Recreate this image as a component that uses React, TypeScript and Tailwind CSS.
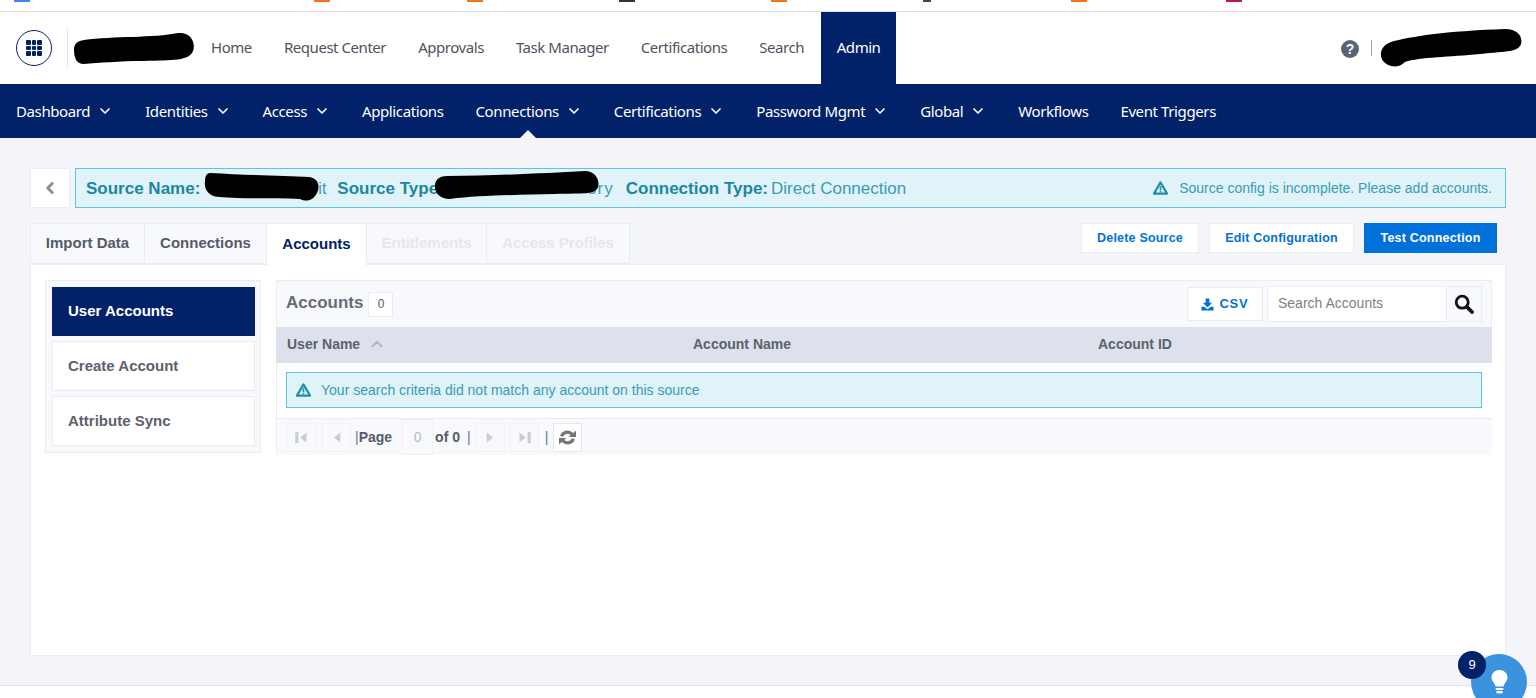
import React from "react";
import { ChevronDown, ChevronLeft, ChevronUp } from "lucide-react";

const top = ["Home", "Request Center", "Approvals", "Task Manager", "Certifications", "Search"];
const nav: [string, boolean, boolean?][] = [
  ["Dashboard", true],
  ["Identities", true],
  ["Access", true],
  ["Applications", false],
  ["Connections", true, true],
  ["Certifications", true],
  ["Password Mgmt", true],
  ["Global", true],
  ["Workflows", false],
  ["Event Triggers", false],
];
const favs: [string, string][] = [
  ["ml-[14px] w-[16px]", "bg-[#4285f4]"],
  ["ml-[284px] w-[16px]", "bg-[#f97316]"],
  ["ml-[137px] w-[16px]", "bg-[#f97316]"],
  ["ml-[136px] w-[16px]", "bg-[#333333]"],
  ["ml-[136px] w-[16px]", "bg-[#f97316]"],
  ["ml-[136px] w-[8px]", "bg-[#444444]"],
  ["ml-[140px] w-[16px]", "bg-[#f97316]"],
  ["ml-[139px] w-[16px]", "bg-[#b91c3c]"],
];

function Warn({ className }: { className: string }) {
  return (
    <svg viewBox="0 0 16 15" className={className}>
      <path d="M8 1.5 L15 13.5 H1 Z" fill="none" stroke="#1f8fa8" strokeWidth="2.3" strokeLinejoin="round" />
      <rect x="7.1" y="5.6" width="1.8" height="4.2" fill="#1f8fa8" />
      <rect x="7.1" y="10.5" width="1.8" height="1.7" fill="#1f8fa8" />
    </svg>
  );
}

function Blob({ className, d, viewBox }: { className: string; d: string; viewBox: string }) {
  return (
    <svg viewBox={viewBox} className={className} preserveAspectRatio="none">
      <path d={d} fill="#000" />
    </svg>
  );
}

function PagerBtn({ d, bar, barLeft }: { d: string; bar?: boolean; barLeft?: boolean }) {
  return (
    <div className="w-[29px] h-[29px] border border-[#f0f2f7] bg-[#f8f9fc] flex items-center justify-center">
      <svg viewBox="0 0 12 12" className="w-[15px] h-[15px]">
        <path d={d} fill="#c9ccd3" />
        {bar && <rect x={barLeft ? 1 : 8.5} y="1.5" width="2.5" height="9" fill="#c9ccd3" />}
      </svg>
    </div>
  );
}

export default function App() {
  return (
    <div className="relative h-[698px] w-[1536px] overflow-hidden bg-[#f3f5f9] font-['Liberation_Sans',Arial,sans-serif]">
      <div className="h-[12px] bg-white border-b border-[#e2e2e2] flex items-start">
        {favs.map(([m, c], i) => (
          <div key={i} className={`${m} h-[2px] ${c}`} />
        ))}
      </div>

      <header className="h-[72px] bg-white flex items-stretch font-['Noto_Sans',sans-serif] relative">
        <div className="w-[67px] flex items-center">
          <div className="ml-[16px] w-[36px] h-[36px] rounded-full border border-[#012169] flex items-center justify-center">
            <div className="grid grid-cols-3 gap-[1px]">
              {Array.from({ length: 9 }).map((_, i) => (
                <div key={i} className="w-[4.5px] h-[4.5px] rounded-[1px] bg-[#012169]" />
              ))}
            </div>
          </div>
        </div>
        <div className="w-px h-[40px] bg-[#e5e7eb] self-center" />
        <div className="w-[127px] flex items-center">
          <Blob
            className="ml-[6px] w-[122px] h-[31px]"
            viewBox="0 0 122 31"
            d="M10 7 C40 3 80 5 105 0 C118 -1 123 10 120 18 C116 28 100 27 70 28 C45 28 25 30 10 31 C2 31 0 24 0 17 C0 10 4 8 10 7 Z"
          />
        </div>
        <nav className="flex items-stretch text-[15px] text-[#4d5360] tracking-[-0.45px]">
          {top.map((t) => (
            <a key={t} className="px-[16px] pb-[1px] flex items-center whitespace-nowrap">{t}</a>
          ))}
          <a className="ml-[1px] w-[75px] pb-[1px] flex items-center justify-center bg-[#012169] text-white">Admin</a>
        </nav>
        <div className="ml-auto flex items-center pr-[14px]">
          <div className="mt-[2px] w-[18px] h-[18px] rounded-full bg-[#5a6478] text-white flex items-center justify-center text-[14px] font-bold font-['Liberation_Sans',sans-serif]">?</div>
          <div className="ml-[12px] w-px h-[16px] bg-[#9aa0ac]" />
          <Blob
            className="ml-[8px] w-[142px] h-[38px]"
            viewBox="0 0 142 38"
            d="M14 12 C40 6 70 2 125 0 C138 0 143 8 141 15 C138 23 128 22 100 25 C70 28 40 28 25 33 C18 40 8 38 3 32 C-2 24 2 15 14 12 Z"
          />
        </div>
      </header>

      <nav className="h-[54px] bg-[#012169] flex items-center pl-[16px] text-white text-[15px] tracking-[-0.39px] font-['Noto_Sans',sans-serif]">
        {nav.map(([t, chev, active]) => (
          <div key={t} className="relative mr-[32px] flex items-center h-full whitespace-nowrap">
            {t}
            {chev && <ChevronDown className="ml-[7px] w-[16px] h-[16px]" strokeWidth={2.5} />}
            {active && (
              <div className="absolute bottom-0 left-[44px] w-0 h-0 border-x-[8px] border-x-transparent border-b-[8px] border-b-[#f3f5f9]" />
            )}
          </div>
        ))}
      </nav>

      <main className="pt-[30px] pl-[30px] pr-[30px]">
        <div className="flex h-[40px] gap-[5px]">
          <div className="w-[40px] bg-white border border-[#e9ecf3] flex items-center justify-center">
            <ChevronLeft className="w-[18px] h-[18px] text-[#8a8f9a]" strokeWidth={4} />
          </div>
          <div className="relative flex-1 bg-[#dff3f9] border border-[#62c3dc] flex items-center pl-[10px] pr-[13px] pt-[2px] text-[17px] text-[#1c87a3] whitespace-nowrap">
            <b>Source Name:</b>
            <span className="ml-[118px] text-[16px] text-[#3a9bb4]">it</span>
            <b className="ml-[11px]">Source Type</b>
            <span className="ml-[149px] tracking-[1px] text-[#3a9bb4]">ory</span>
            <b className="ml-[12px]">Connection Type:</b>
            <span className="ml-[3px] text-[#3a9bb4]">Direct Connection</span>
            <div className="ml-auto mb-[2px] flex items-center text-[14px] text-[#3a9bb4]">
              <Warn className="w-[15px] h-[14px] mr-[11px]" />
              Source config is incomplete. Please add accounts.
            </div>
            <Blob
              className="absolute left-[128px] top-[4px] w-[115px] h-[29px]"
              viewBox="0 0 115 29"
              d="M6 0 C40 2 80 3 105 4 C115 5 116 14 113 20 C110 26 104 30 96 26 C70 25 40 26 15 24 C3 23 0 15 1 8 C1 3 3 0 6 0 Z"
            />
            <Blob
              className="absolute left-[359px] top-[2px] w-[164px] h-[28px]"
              viewBox="0 0 164 28"
              d="M12 5 C60 5 110 2 150 0 C161 0 165 10 163 16 C160 24 150 22 120 23 C85 24 45 24 15 28 C3 28 -1 20 0 13 C1 8 5 5 12 5 Z"
            />
          </div>
        </div>

        <div className="mt-[15px] flex items-start justify-between h-[41px] relative z-10">
          <div className="flex h-[42px] text-[15px] font-bold">
            <div className="w-[115px] h-[41px] flex items-center justify-center bg-[#f8f9fc] border border-[#e9ecf3] text-[#555b68]">Import Data</div>
            <div className="w-[122px] h-[41px] flex items-center justify-center bg-[#f8f9fc] border-y border-r border-[#e9ecf3] text-[#555b68]">Connections</div>
            <div className="w-[100px] pb-[1px] flex items-center justify-center bg-white border-t border-r border-[#e9ecf3] text-[#012169]">Accounts</div>
            <div className="w-[120px] h-[41px] flex items-center justify-center bg-[#f8f9fc] border-y border-r border-[#e9ecf3] text-[#e6e7ec]">Entitlements</div>
            <div className="w-[143px] h-[41px] flex items-center justify-center bg-[#f8f9fc] border-y border-r border-[#e9ecf3] text-[#e6e7ec]">Access Profiles</div>
          </div>
          <div className="flex gap-[10px] pr-[9px] text-[12.5px] font-bold tracking-[0.2px]">
            <div className="w-[118px] h-[30px] flex items-center justify-center bg-white border border-[#e9ecf3] text-[#0071da]">Delete Source</div>
            <div className="w-[145px] h-[30px] flex items-center justify-center bg-white border border-[#e9ecf3] text-[#0071da]">Edit Configuration</div>
            <div className="w-[133px] h-[30px] flex items-center justify-center bg-[#0071da] text-white">Test Connection</div>
          </div>
        </div>

        <section className="h-[392px] bg-white border border-[#e9ecf3] pt-[15px] pl-[14px] pr-[13px] flex items-start gap-[15px]">
          <aside className="w-[216px] h-[173px] bg-[#f8f9fc] border border-[#e9ecf3] pt-[6px] pl-[6px] pr-[5px] flex flex-col gap-[5px] text-[15px] font-bold">
            <div className="h-[49px] flex items-center pl-[16px] bg-[#012169] text-white">User Accounts</div>
            <div className="h-[50px] flex items-center pl-[15px] bg-white border border-[#e9ecf3] text-[#5c616e]">Create Account</div>
            <div className="h-[50px] flex items-center pl-[15px] bg-white border border-[#e9ecf3] text-[#5c616e]">Attribute Sync</div>
          </aside>

          <div className="flex-1 flex flex-col">
            <div className="h-[47px] bg-[#f8f9fc] border-x border-t border-[#e9ecf3] flex items-center pl-[9px] pr-[9px]">
              <span className="pb-[2px] text-[17px] font-bold text-[#666b76]">Accounts</span>
              <span className="ml-[5px] w-[25px] h-[25px] bg-white border border-[#e9ecf3] flex items-center justify-center text-[12px] text-[#555b68]">0</span>
              <div className="ml-auto w-[76px] h-[34px] bg-white border border-[#e9ecf3] flex items-center justify-center text-[#0071da] text-[13px] font-bold tracking-[0.8px]">
                <svg viewBox="0 0 14 14" className="w-[13px] h-[13px] mr-[5px]">
                  <path d="M5 0.5 H9 V5 H12 L7 10.2 L2 5 H5 Z" fill="#0071da" />
                  <path d="M0.5 9.5 H3.5 L7 12 L10.5 9.5 H13.5 V13.5 H0.5 Z" fill="#0071da" />
                </svg>
                CSV
              </div>
              <div className="ml-[4px] w-[215px] h-[36px] bg-white border border-[#e9ecf3] flex items-stretch">
                <span className="flex-1 flex items-center pl-[10px] pb-[2px] text-[14px] text-[#7c7f86]">Search Accounts</span>
                <div className="w-[35px] bg-[#f8f9fc] border-l border-[#e9ecf3] flex items-center justify-center">
                  <svg viewBox="0 0 20 20" className="w-[20px] h-[20px]" fill="none" stroke="#111">
                    <circle cx="8.2" cy="8.2" r="6" strokeWidth="2.8" />
                    <path d="M12.8 12.8 L18 18" strokeWidth="3.8" strokeLinecap="round" />
                  </svg>
                </div>
              </div>
            </div>
            <div className="h-[36px] bg-[#dde1ec] grid grid-cols-[406px_405px_1fr] items-center pl-[11px] pb-[2px] text-[14px] font-bold text-[#5c616e]">
              <div className="flex items-center">
                User Name
                <ChevronUp className="ml-[8px] w-[18px] h-[18px] text-[#b4b8c2]" strokeWidth={3} />
              </div>
              <div>Account Name</div>
              <div>Account ID</div>
            </div>
            <div className="h-[56px] border-l border-b border-[#e9ecf3] pt-[9px] pl-[9px] pr-[10px]">
              <div className="h-[36px] bg-[#dff3f9] border border-[#62c3dc] flex items-center pl-[9px] text-[14px] text-[#3a9bb4]">
                <Warn className="w-[15px] h-[14px] mr-[10px]" />
                Your search criteria did not match any account on this source
              </div>
            </div>
            <div className="h-[36px] bg-[#f8f9fc] border-l border-[#e9ecf3] flex items-center pl-[10px] text-[14px] font-bold text-[#555b68]">
              <PagerBtn d="M10 2 L5 6 L10 10 Z" bar barLeft />
              <div className="ml-[6px]"><PagerBtn d="M9 2 L4 6 L9 10 Z" /></div>
              <span className="ml-[4px] font-normal text-[#5a78a8]">|</span>
              <span>Page</span>
              <div className="ml-[10px] w-[31px] h-[36px] bg-[#f8f9fc] border border-[#f0f2f7] flex items-center justify-center font-normal text-[#b9bcc4]">0</div>
              <span className="ml-[2px]">of 0</span>
              <span className="ml-[7px] font-normal text-[#5a78a8]">|</span>
              <div className="ml-[5px]"><PagerBtn d="M3 2 L8 6 L3 10 Z" /></div>
              <div className="ml-[5px]"><PagerBtn d="M2 2 L7 6 L2 10 Z" bar /></div>
              <span className="ml-[6px] font-normal text-[#5a78a8]">|</span>
              <div className="ml-[5px] w-[29px] h-[29px] bg-white border border-[#e4e7ef] flex items-center justify-center">
                <svg viewBox="0 0 16 16" className="w-[17px] h-[17px]" fill="none" stroke="#777" strokeWidth="3">
                  <path d="M2.5 7 C3.5 3 9 1.5 12.5 5" />
                  <path d="M13.5 9 C12.5 13 7 14.5 3.5 11" />
                  <path d="M9 7.5 H16 V1.5 Z" fill="#777" stroke="none" />
                  <path d="M7 8.5 H0 V14.5 Z" fill="#777" stroke="none" />
                </svg>
              </div>
            </div>
          </div>
        </section>
      </main>

      <div className="absolute left-0 right-0 bottom-0 h-[13px] bg-white border-t border-[#e5e7ee]" />
      <div className="absolute left-[1471px] top-[654px] w-[56px] h-[56px] rounded-full bg-[#3b93e0] flex items-start justify-center pt-[16px]">
        <svg viewBox="0 0 16 24" className="w-[17px] h-[24px]">
          <path d="M8 0 C3.5 0 0 3.3 0 7.6 C0 10.6 2 12.3 3 14 C3.6 15 3.8 15.6 4 16.5 H12 C12.2 15.6 12.4 15 13 14 C14 12.3 16 10.6 16 7.6 C16 3.3 12.5 0 8 0 Z" fill="#fff" />
          <rect x="4.2" y="18" width="7.6" height="2" fill="#fff" />
          <rect x="5" y="21" width="6" height="2.4" fill="#fff" />
        </svg>
      </div>
      <div className="absolute left-[1458px] top-[651px] w-[28px] h-[28px] rounded-full bg-[#012169] text-white text-[13px] flex items-center justify-center">9</div>
    </div>
  );
}
